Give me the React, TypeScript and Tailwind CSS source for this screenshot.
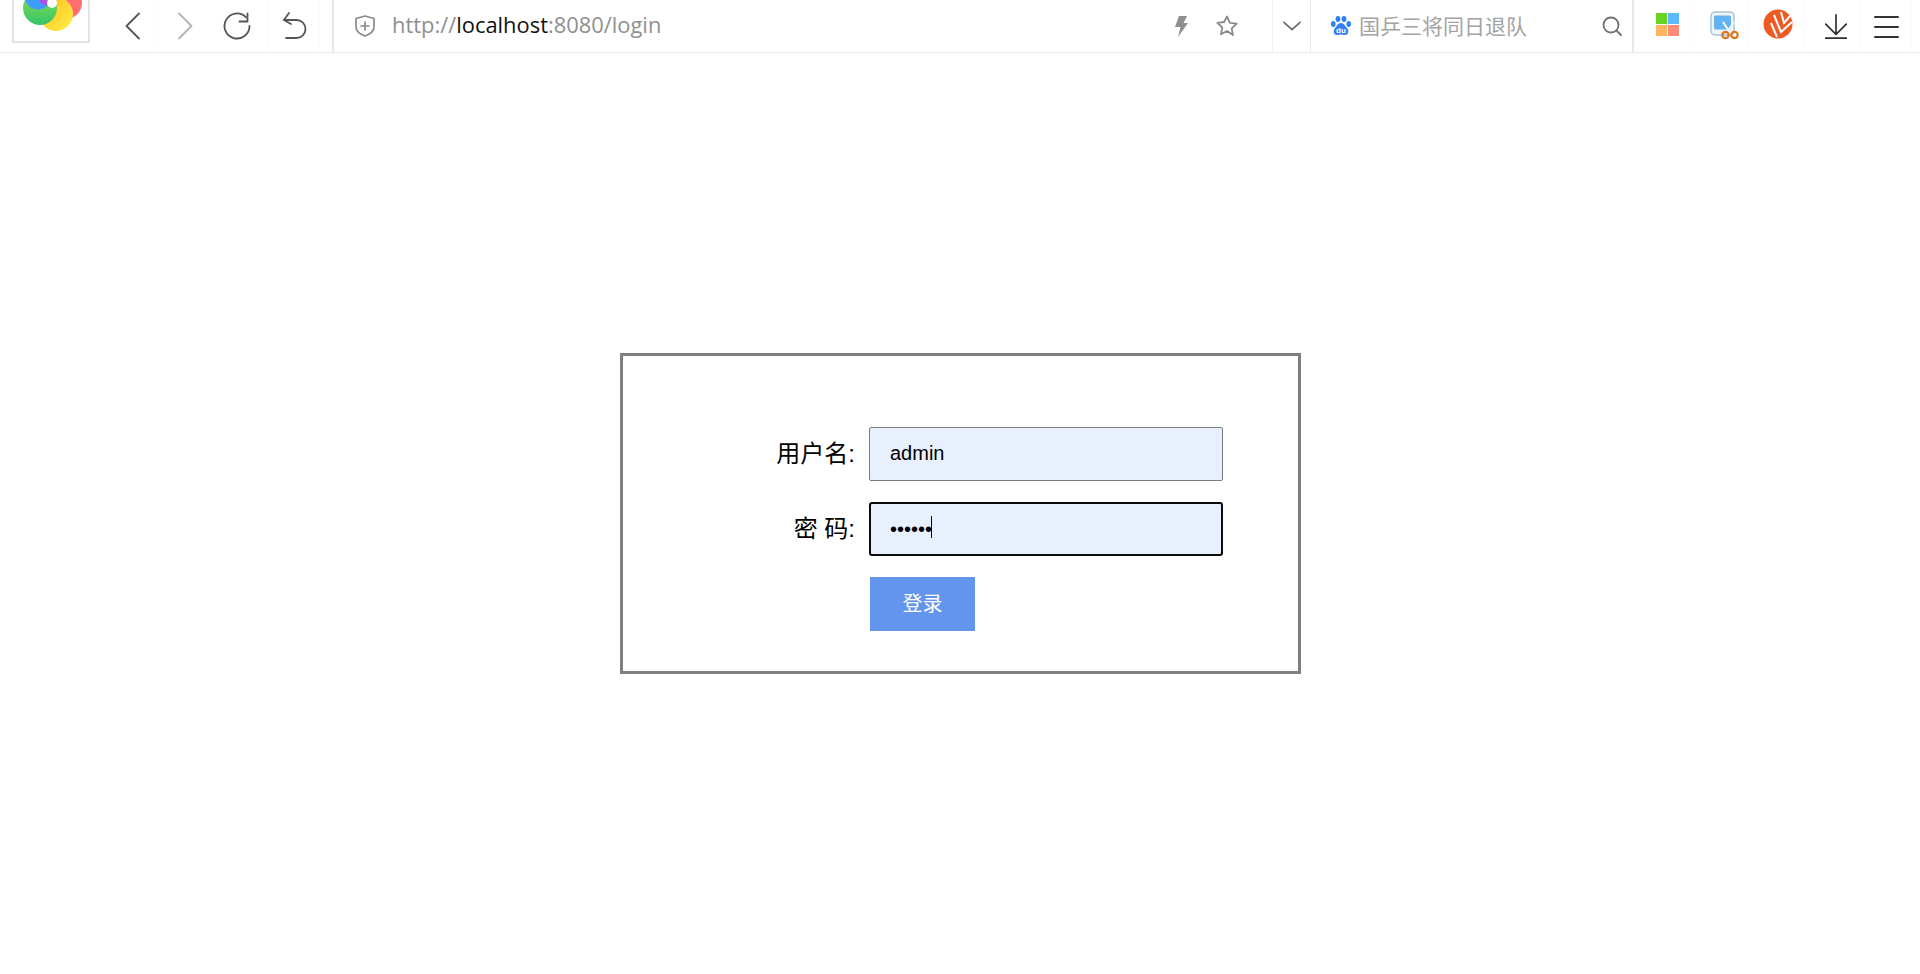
import React from "react";

const sans = "font-['Open_Sans','Noto_Sans_CJK_SC',sans-serif]";

function Cell({ w, children, line = false }: { w: string; children: React.ReactNode; line?: boolean }) {
  return (
    <div className={`flex h-full shrink-0 items-center justify-center ${w} ${line ? "border-r border-[#fbfbfb]" : ""}`}>
      {children}
    </div>
  );
}

function Logo() {
  return (
    <svg width="78" height="42" viewBox="12 0 78 42" className="block">
      <defs>
        <linearGradient id="lg" x1="0" y1="0" x2="0" y2="1">
          <stop offset="0" stopColor="#8be04e" />
          <stop offset="1" stopColor="#36c46a" />
        </linearGradient>
        <linearGradient id="ly" x1="0" y1="0" x2="1" y2="1">
          <stop offset="0" stopColor="#ffb81a" />
          <stop offset="1" stopColor="#fff04a" />
        </linearGradient>
      </defs>
      <circle cx="66" cy="3" r="16" fill="#ff6f6f" />
      <circle cx="56" cy="14" r="17" fill="url(#ly)" />
      <circle cx="40" cy="8" r="17" fill="url(#lg)" />
      <circle cx="38" cy="-4" r="13.500" fill="#3f9bff" />
      <circle cx="46" cy="-2" r="7" fill="#b04fe0" />
      <circle cx="52" cy="3" r="5" fill="#ffffff" />
    </svg>
  );
}

function Stroke({ size = 30, color = "#555", sw = 1.8, children }: { size?: number; color?: string; sw?: number; children: React.ReactNode }) {
  return (
    <svg width={size} height={size} viewBox="0 0 30 30" fill="none" stroke={color} strokeWidth={sw} strokeLinecap="round" strokeLinejoin="round">
      {children}
    </svg>
  );
}

function Baidu() {
  return (
    <svg width="22" height="22" viewBox="0 0 22 22">
      <g fill="#2f80f5">
        <ellipse cx="3.3" cy="9" rx="2.3" ry="2.9" />
        <ellipse cx="8" cy="4" rx="2.4" ry="3" />
        <ellipse cx="14" cy="4" rx="2.4" ry="3" />
        <ellipse cx="18.7" cy="9" rx="2.3" ry="2.9" />
        <path d="M11 8c-3 0-4 3-6 5-2 2-2 7 2 7 1.500 0 2.500-.6 4-.6s2.500.6 4 .6c4 0 4-5 2-7-2-2-3-5-6-5z" />
      </g>
      <text x="11" y="18" textAnchor="middle" fontSize="8" fontFamily="Liberation Sans" fontWeight="700" fill="#fff">du</text>
    </svg>
  );
}

function Capture() {
  return (
    <svg width="30" height="30" viewBox="0 0 30 30">
      <rect x="2" y="2" width="23" height="23" rx="4" fill="#eef4fa" stroke="#a9c0d4" strokeWidth="1.400" />
      <rect x="5" y="5.500" width="17" height="14" rx="1.500" fill="#62b2f2" />
      <path d="M14 12l8 12M25 12l-8 12" stroke="#f4f4f4" strokeWidth="2.200" />
      <circle cx="16.500" cy="25" r="3.200" fill="none" stroke="#d9761f" strokeWidth="2.200" />
      <circle cx="25.500" cy="25" r="3.200" fill="none" stroke="#d9761f" strokeWidth="2.200" />
    </svg>
  );
}

function Orange() {
  return (
    <svg width="30" height="30" viewBox="0 0 30 30">
      <circle cx="15" cy="15" r="14.500" fill="#ee5a24" />
      <path d="M11 6l7 17 11-10M18 3l3 11 7-8M8 14l6 14" fill="none" stroke="#fff" strokeWidth="2" />
    </svg>
  );
}

function Toolbar() {
  return (
    <header className={`flex h-[53px] w-full shrink-0 items-stretch border-b border-[#e6e8eb] bg-white ${sans}`}>
      <div className="ml-3 h-[43px] w-[78px] shrink-0 overflow-hidden border-x-2 border-b-2 border-[#e0e2e4]">
        <div className="-ml-0.5">
          <Logo />
        </div>
      </div>
      <div className="w-[18px] shrink-0" />
      <Cell w="w-[50px]" line>
        <Stroke>
          <path d="M21 2.500 L8.500 15 L21 27.500" />
        </Stroke>
      </Cell>
      <Cell w="w-[53px]">
        <Stroke color="#b4b4b4">
          <path d="M9 2.500 L21.500 15 L9 27.500" />
        </Stroke>
      </Cell>
      <Cell w="w-[57px]" line>
        <div className="pr-1">
          <Stroke>
            <path d="M27.500 15a12.500 12.500 0 1 1-3.500-8.700" />
            <path d="M25.500 2.500v8h-8" />
          </Stroke>
        </div>
      </Cell>
      <Cell w="w-[52px]" line>
        <Stroke>
          <path d="M10 2 L5 9 L12 13" />
          <path d="M5 9H17.500a9 9 0 0 1 0 18H7" />
        </Stroke>
      </Cell>
      <div className="w-[14px] shrink-0 border-r-2 border-[#e6e8eb]" />

      <div className="ml-[20px] flex shrink-0 items-center">
        <svg width="22" height="24" viewBox="0 0 22 24" fill="none" stroke="#8a8a8a" strokeWidth="1.700" strokeLinejoin="round" strokeLinecap="round">
          <path d="M11 2 L20 4.500 V13 C20 17.500 15 20.500 11 22 C7 20.500 2 17.500 2 13 V4.500 Z" />
          <path d="M11 8v8M7 12h8" />
        </svg>
      </div>
      <div className="mb-[2px] ml-[16px] flex min-w-0 flex-1 items-center whitespace-nowrap text-[21.900px] leading-none text-[#8f8f8f]">
        <span>http://</span>
        <span className="text-[#111]">localhost</span>
        <span>:8080/login</span>
      </div>

      <Cell w="w-[24px]">
        <svg width="18" height="24" viewBox="0 0 18 24" fill="#8e8e8e">
          <path d="M7 2h8l-3.500 7H16L6 23l2.500-10H3z" />
        </svg>
      </Cell>
      <div className="w-[22px] shrink-0" />
      <Cell w="w-[24px]">
        <svg width="24" height="24" viewBox="0 0 24 24" fill="none" stroke="#8a8a8a" strokeWidth="1.800" strokeLinejoin="round">
          <path d="M12 2.500l2.900 6.300 6.800.8-5 4.700 1.300 6.800L12 17l-6 3.300 1.300-6.800-5-4.700 6.800-.8z" />
        </svg>
      </Cell>
      <div className="w-[34px] shrink-0 border-r border-[#f1f2f3]" />
      <Cell w="w-[37px]">
        <Stroke size={22} color="#666" sw={2.200}>
          <path d="M4 10 L15 20 L26 10" />
        </Stroke>
      </Cell>

      <div className="flex w-[324px] shrink-0 items-center border-l border-r-2 border-[#e6e8eb]">
        <div className="ml-[19px] flex shrink-0">
          <Baidu />
        </div>
        <span className="ml-[7px] whitespace-nowrap text-[21px] leading-none text-[#a3a3a3]">国乒三将同日退队</span>
        <div className="ml-auto mr-[8px] flex">
          <svg width="24" height="24" viewBox="0 0 24 24" fill="none" stroke="#707070" strokeWidth="1.800" strokeLinecap="round">
            <circle cx="11" cy="11" r="7.500" />
            <path d="M16.500 16.500l4.500 4.500" />
          </svg>
        </div>
      </div>

      <Cell w="w-[60px]" line>
        <div className="mb-1 ml-2 grid grid-cols-2 gap-[1px]">
          <div className="h-[11px] w-[11px] bg-[#66d522]" />
          <div className="h-[11px] w-[11px] bg-[#5cb9ff]" />
          <div className="h-[11px] w-[11px] bg-[#ffb55e]" />
          <div className="h-[11px] w-[11px] bg-[#ff8a75]" />
        </div>
      </Cell>
      <Cell w="w-[55px]" line>
        <div className="mb-[3px] ml-[5px]">
          <Capture />
        </div>
      </Cell>
      <Cell w="w-[56px]" line>
        <div className="mb-[5px] ml-[3px]">
          <Orange />
        </div>
      </Cell>
      <Cell w="w-[55px]" line>
        <div className="ml-[7px]">
          <Stroke size={28} sw={1.800} color="#2f2f2f">
            <path d="M15 3v20M4 13l11 11 11-11M4 28h22" />
          </Stroke>
        </div>
      </Cell>
      <Cell w="w-[52px]" line>
        <div className="mt-[2px]">
          <Stroke sw={2} color="#333">
            <path d="M4 5h23M4 15h23M4 25h23" />
          </Stroke>
        </div>
      </Cell>
      <div className="w-[8px] shrink-0" />
    </header>
  );
}

function Label({ children }: { children: React.ReactNode }) {
  return (
    <label className="w-[241px] shrink-0 whitespace-pre pr-[14px] text-right text-[24px] leading-none text-black">
      {children}
    </label>
  );
}

export default function App() {
  return (
    <div className="flex h-[974px] w-full flex-col overflow-hidden bg-white font-['Liberation_Sans','Noto_Sans_CJK_SC',sans-serif]">
      <Toolbar />
      <main className="pt-[300px]">
        <form className="ml-[620px] flex h-[321px] w-[681px] flex-col border-[3px] border-[#808080] pl-[5px] pt-[71px]">
          <div className="flex h-[54px] items-center">
            <Label>用户名:</Label>
            <input
              readOnly
              value="admin"
              className="h-[54px] w-[354px] rounded-[2px] border border-[#7b7b7b] bg-[#e8f0fe] pb-0.5 pl-5 text-[20px] text-black outline-none"
            />
          </div>
          <div className="mt-[21px] flex h-[54px] items-center">
            <Label>密 码:</Label>
            <div className="relative">
              <input
                readOnly
                type="password"
                value="123456"
                className="block h-[54px] w-[354px] rounded-[3px] border-2 border-[#0c0c0c] bg-[#e8f0fe] pl-[19px] text-[20px] text-black outline-none"
              />
              <div className="absolute left-[62px] top-[14px] h-[22px] w-px bg-black" />
            </div>
          </div>
          <button
            type="button"
            className="ml-[242px] mt-[21px] h-[54px] w-[105px] bg-[#6495ed] text-[20px] text-white"
          >
            登录
          </button>
        </form>
      </main>
    </div>
  );
}
